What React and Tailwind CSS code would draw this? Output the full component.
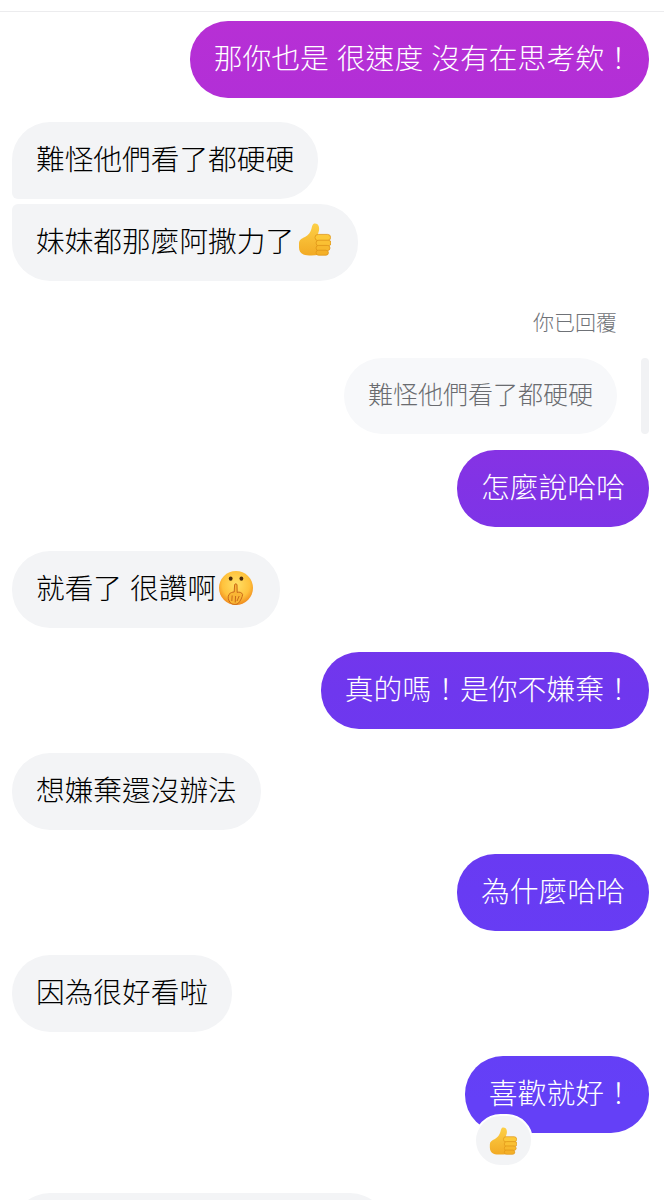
const SENT_BG =
  'bg-fixed bg-[linear-gradient(180deg,#b830d4_0px,#b22fd7_100px,#8233e5_480px,#6f37ee_690px,#683bf3_890px,#6440f7_1100px)]';

function ThumbsUp({ size = 33 }) {
  return (
    <svg width={size} height={size} viewBox="0 0 33 33" className="block">
      <defs>
        <linearGradient id="thumb" x1="0" y1="0" x2="0" y2="1">
          <stop offset="0" stopColor="#fdd046" />
          <stop offset="1" stopColor="#f2aa24" />
        </linearGradient>
      </defs>
      <path
        d="M1 20.5C1 17 3.5 15.6 7 14C10.3 12.3 12.4 9.5 13.4 6C14.2 3 14.4 0.5 17 0.5C20.4 0.5 21.6 4 21 7.4C20.6 9.2 20 10.6 19.6 12L21 31.8C15 32.8 9 32.6 5.4 31.4C2.4 30.4 1 27.4 1 24.5Z"
        fill="url(#thumb)"
      />
      <rect x="17" y="11.4" width="15.6" height="6.2" rx="3.1" fill="#fcc838" stroke="#e09618" strokeWidth="0.8" />
      <rect x="18" y="17.2" width="15" height="5.6" rx="2.8" fill="#fac033" stroke="#e09618" strokeWidth="0.8" />
      <rect x="18" y="22.4" width="14" height="5.2" rx="2.6" fill="#f7b82d" stroke="#e09618" strokeWidth="0.8" />
      <rect x="18" y="27.2" width="12.4" height="5" rx="2.5" fill="#f4b028" stroke="#e09618" strokeWidth="0.8" />
    </svg>
  );
}

function ShushFace() {
  return (
    <svg width="34" height="34" viewBox="0 0 34 34" className="block">
      <defs>
        <radialGradient id="face" cx="0.5" cy="0.4" r="0.62">
          <stop offset="0" stopColor="#ffe066" />
          <stop offset="0.65" stopColor="#ffc23c" />
          <stop offset="1" stopColor="#ee8419" />
        </radialGradient>
      </defs>
      <circle cx="17" cy="17" r="17" fill="url(#face)" />
      <ellipse cx="11.7" cy="7.6" rx="1.9" ry="2.2" fill="#4a2a0c" />
      <ellipse cx="22.4" cy="7.6" rx="1.9" ry="2.2" fill="#4a2a0c" />
      <path
        d="M15.6 14C15.6 12.4 18 12.4 18 14L18.2 21.5C20 20.5 23 21.5 23.6 23.5C23.4 26 21.5 30 19 32.6C16.5 34 12.8 33.6 10.8 31C9 28.5 8.6 25.8 10 23.4C11.4 21.6 13.6 21 15.2 21Z"
        fill="#f9b534"
        stroke="#c9691a"
        strokeWidth="1"
      />
      <path d="M13.2 24.5L12.8 30M16.6 25L16.2 31.5M20.2 25L18 30" stroke="#c9691a" strokeWidth="1" fill="none" />
    </svg>
  );
}

// 句尾的全形驚嘆號在原圖裡比較窄
function Text({ children }) {
  const last = children.endsWith('！');
  return (
    <span className="whitespace-nowrap">
      {last ? children.slice(0, -1) : children}
      {last && <span className="inline-block w-[21px]">！</span>}
    </span>
  );
}

function Sent({ text, className = 'mt-6' }) {
  return (
    <div className={`self-end flex items-center h-[77px] px-6 rounded-[38px] text-white text-[28.8px] ${SENT_BG} ${className}`}>
      <Text>{text}</Text>
    </div>
  );
}

function Received({ text, emoji, className = 'mt-6' }) {
  return (
    <div className={`self-start flex items-center h-[77px] px-6 bg-[#f3f4f6] text-black ${className}`}>
      <Text>{text}</Text>
      {emoji && <span className="flex justify-center w-10 -mt-[6px]">{emoji}</span>}
    </div>
  );
}

export default function App() {
  return (
    <div className="h-[1200px] overflow-hidden bg-white text-[28.7px] font-light font-['Liberation_Sans','Noto_Sans_CJK_TC',sans-serif]">
      <div className="h-3 border-b border-[#ececee]" />
      <div className="flex flex-col pl-3 pr-[15px]">
        <Sent text="那你也是 很速度 沒有在思考欸！" className="mt-[9px]" />
        <Received text="難怪他們看了都硬硬" className="mt-6 rounded-[38px] rounded-bl-[6px]" />
        <Received text="妹妹都那麼阿撒力了" emoji={<ThumbsUp />} className="mt-[5px] rounded-[38px] rounded-tl-[6px]" />

        <div className="self-end mr-8 mt-[28px] text-[21px] leading-7 text-[#6f7277]">你已回覆</div>
        <div className="self-end flex items-stretch gap-6 mt-[21px]">
          <div className="flex items-center h-[76px] px-6 rounded-[38px] bg-[#f7f8fa] text-[25px] text-[#6a6c70]">
            難怪他們看了都硬硬
          </div>
          <div className="w-2 rounded bg-[#f1f2f4]" />
        </div>
        <Sent text="怎麼說哈哈" className="mt-4" />

        <Received text="就看了 很讚啊" emoji={<div className="mt-[3px]"><ShushFace /></div>} className="mt-6 rounded-[38px]" />
        <Sent text="真的嗎！是你不嫌棄！" />
        <Received text="想嫌棄還沒辦法" className="mt-6 rounded-[38px]" />
        <Sent text="為什麼哈哈" />
        <Received text="因為很好看啦" className="mt-6 rounded-[38px]" />

        <div className="relative self-end mt-6">
          <Sent text="喜歡就好！" className="" />
          <div className="absolute left-[9px] top-[58px] flex items-center justify-center w-[59px] h-[53px] rounded-full border-2 border-white bg-[#f3f4f6]">
            <ThumbsUp size={28} />
          </div>
        </div>

        <div className="self-start w-[376px] h-[77px] mt-[60px] rounded-[38px] bg-[#f3f4f6]" />
      </div>
    </div>
  );
}
